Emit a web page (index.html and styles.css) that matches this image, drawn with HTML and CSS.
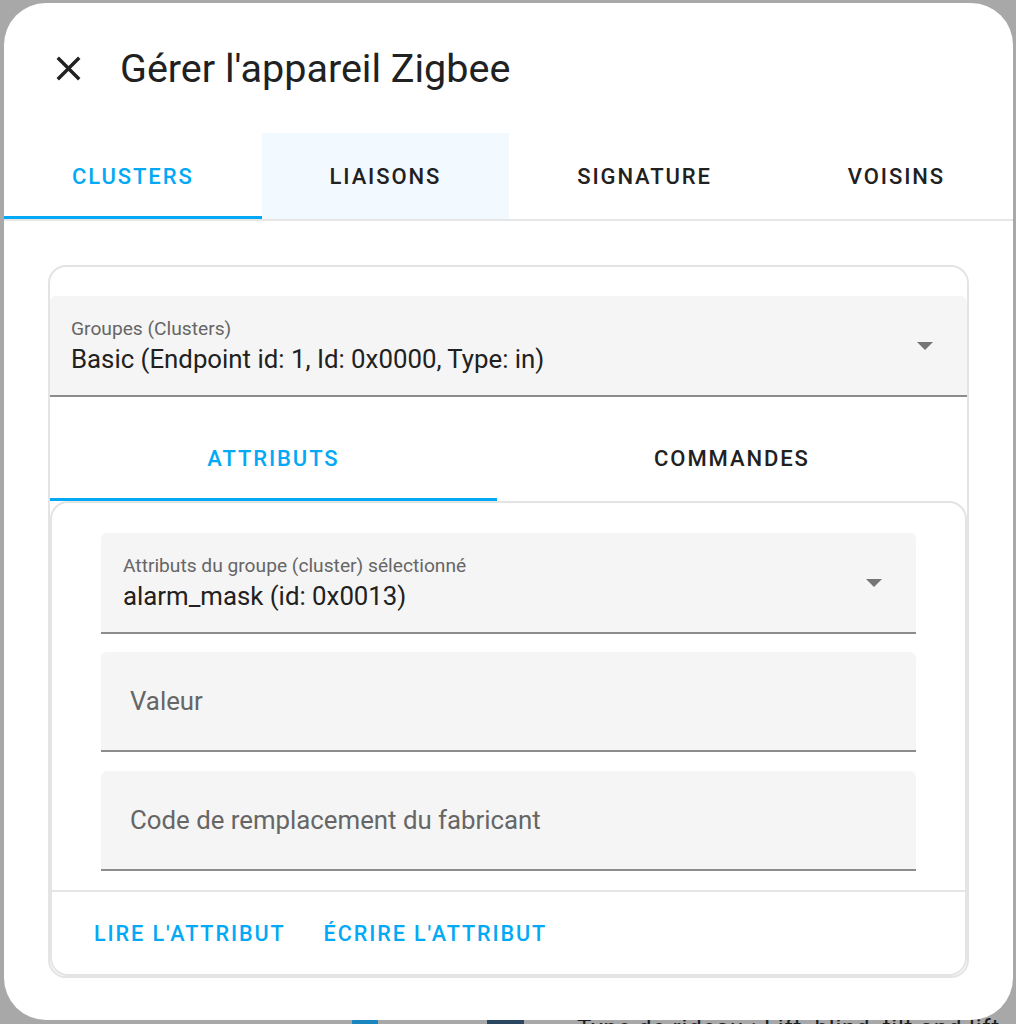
FILE: index.html
```html
<!doctype html>
<html lang="fr">
<head>
    <meta charset="UTF-8">
    <meta name="viewport" content="width=device-width, initial-scale=1.0">
    <title>Gérer l'appareil Zigbee</title>
    <link rel="stylesheet" href="styles.css">
</head>
<body>
<div class="page">
    <div class="page-bottom">
        <span class="page-icon page-icon-blue"></span>
        <span class="page-icon page-icon-dark"></span>
        <span class="page-text">Type de rideau : Lift, blind, tilt and lift</span>
    </div>
</div>

<div class="dialog">
    <div class="dialog-header">
        <button class="close-btn" aria-label="Fermer">
            <svg viewBox="0 0 24 24" width="41" height="41">
                <path fill="#212121" d="M19,6.41L17.59,5L12,10.59L6.41,5L5,6.41L10.59,12L5,17.59L6.41,19L12,13.41L17.59,19L19,17.59L13.41,12L19,6.41Z"/>
            </svg>
        </button>
        <h2 class="dialog-title">Gérer l'appareil Zigbee</h2>
    </div>

    <div class="tabs main-tabs">
        <div class="tab active">Clusters</div>
        <div class="tab hover">Liaisons</div>
        <div class="tab">Signature</div>
        <div class="tab">Voisins</div>
    </div>

    <div class="dialog-content">
        <div class="card">
            <div class="select select-wide">
                <div class="select-text">
                    <div class="field-label">Groupes (Clusters)</div>
                    <div class="field-value">Basic (Endpoint id: 1, Id: 0x0000, Type: in)</div>
                </div>
                <span class="arrow"></span>
            </div>

            <div class="tabs sub-tabs">
                <div class="tab active">Attributs</div>
                <div class="tab">Commandes</div>
            </div>

            <div class="inner-card">
                <div class="inner-body">
                    <div class="select">
                        <div class="select-text">
                            <div class="field-label">Attributs du groupe (cluster) sélectionné</div>
                            <div class="field-value">alarm_mask (id: 0x0013)</div>
                        </div>
                        <span class="arrow"></span>
                    </div>
                    <div class="textfield">Valeur</div>
                    <div class="textfield">Code de remplacement du fabricant</div>
                </div>
                <div class="inner-actions">
                    <button class="text-btn">Lire l'attribut</button>
                    <button class="text-btn">Écrire l'attribut</button>
                </div>
            </div>
        </div>
    </div>
</div>
</body>
</html>
```

FILE: styles.css
```css
* {
    padding: 0;
    margin: 0;
    box-sizing: border-box;
}

html, body {
    width: 100%;
    height: 100%;
    overflow: hidden;
}

body {
    font-family: Roboto, "Noto Sans", "Liberation Sans", sans-serif;
    background-color: #a8a8a8;
    color: #212121;
    position: relative;
}

button {
    font-family: inherit;
    border: none;
    background: none;
    cursor: pointer;
}

/* page behind the scrim */
.page {
    height: 1024px;
    display: flex;
    flex-direction: column;
    justify-content: flex-end;
}

.page-bottom {
    display: flex;
    align-items: flex-start;
    height: 40px;
    margin-bottom: -32px;
    padding-left: 352px;
}

.page-icon {
    display: inline-block;
    width: 26px;
    height: 30px;
}

.page-icon-blue {
    background-color: #1a86c0;
    border-radius: 4px 4px 50% 50%;
    margin-top: 2px;
}

.page-icon-dark {
    background-color: #2a4660;
    width: 37px;
    margin-left: 109px;
    margin-top: 2px;
}

.page-text {
    margin-left: 53px;
    font-size: 24px;
    color: #1e1e1e;
    letter-spacing: 0.8px;
    line-height: 30px;
    margin-top: -3px;
    white-space: nowrap;
}

/* dialog */
.dialog {
    position: absolute;
    top: 3px;
    left: 4px;
    width: 1009px;
    height: 1017px;
    background-color: #fff;
    border-radius: 42px;
    overflow: hidden;
    display: flex;
    flex-direction: column;
}

.dialog-header {
    height: 130px;
    display: flex;
    align-items: center;
    padding-left: 44px;
    gap: 31px;
}

.close-btn {
    width: 41px;
    height: 41px;
    display: flex;
}

.dialog-title {
    font-size: 39.5px;
    font-weight: 400;
    color: #212121;
}

/* tabs */
.tabs {
    display: flex;
}

.tab {
    flex: 1 1 auto;
    height: 86px;
    display: flex;
    align-items: center;
    justify-content: center;
    font-size: 22px;
    font-weight: 500;
    letter-spacing: 1.9px;
    text-transform: uppercase;
    color: #212121;
    border-bottom: 3px solid transparent;
    padding-top: 3px;
}

.tab.active {
    color: #03a9f4;
    border-bottom-color: #03a9f4;
}

.tab.hover {
    background-color: #f3faff;
}

.main-tabs {
    border-bottom: 2px solid #e6e6e6;
}

.sub-tabs {
    padding-top: 18px;
}

.dialog-content {
    padding: 44px 44px 0 44px;
}

.card {
    border: 2px solid #e4e4e4;
    border-radius: 18px;
    padding-top: 29px;
}

/* select and text fields */
.select, .textfield {
    background-color: #f5f5f5;
    border-radius: 6px 6px 0 0;
    border-bottom: 2px solid #8c8c8c;
}

.select {
    height: 101px;
    display: flex;
    align-items: flex-start;
    justify-content: space-between;
    padding: 21px 34px 0 22px;
}

.select-wide {
    padding-left: 21px;
}

.field-label {
    font-size: 19.2px;
    line-height: 23px;
    color: #666;
}

.field-value {
    font-size: 25.8px;
    line-height: 31px;
    margin-top: 4px;
    color: #212121;
}

.arrow {
    width: 0;
    height: 0;
    border-left: 8px solid transparent;
    border-right: 8px solid transparent;
    border-top: 8px solid #757575;
    margin-top: 25px;
}

.textfield {
    height: 100px;
    display: flex;
    align-items: center;
    padding-left: 29px;
    font-size: 25.8px;
    color: #666;
    margin-top: 18px;
}

.textfield + .textfield {
    margin-top: 19px;
}

.inner-card {
    border: 2px solid #e4e4e4;
    border-radius: 18px;
}

.inner-body {
    padding: 30px 49px 19px 49px;
}

.inner-actions {
    border-top: 2px solid #e6e6e6;
    height: 84px;
    display: flex;
    align-items: center;
    gap: 14px;
    padding-left: 30px;
}

.text-btn {
    padding: 0 12px;
    height: 54px;
    font-size: 21.6px;
    font-weight: 500;
    letter-spacing: 1.9px;
    text-transform: uppercase;
    color: #03a9f4;
}
```
